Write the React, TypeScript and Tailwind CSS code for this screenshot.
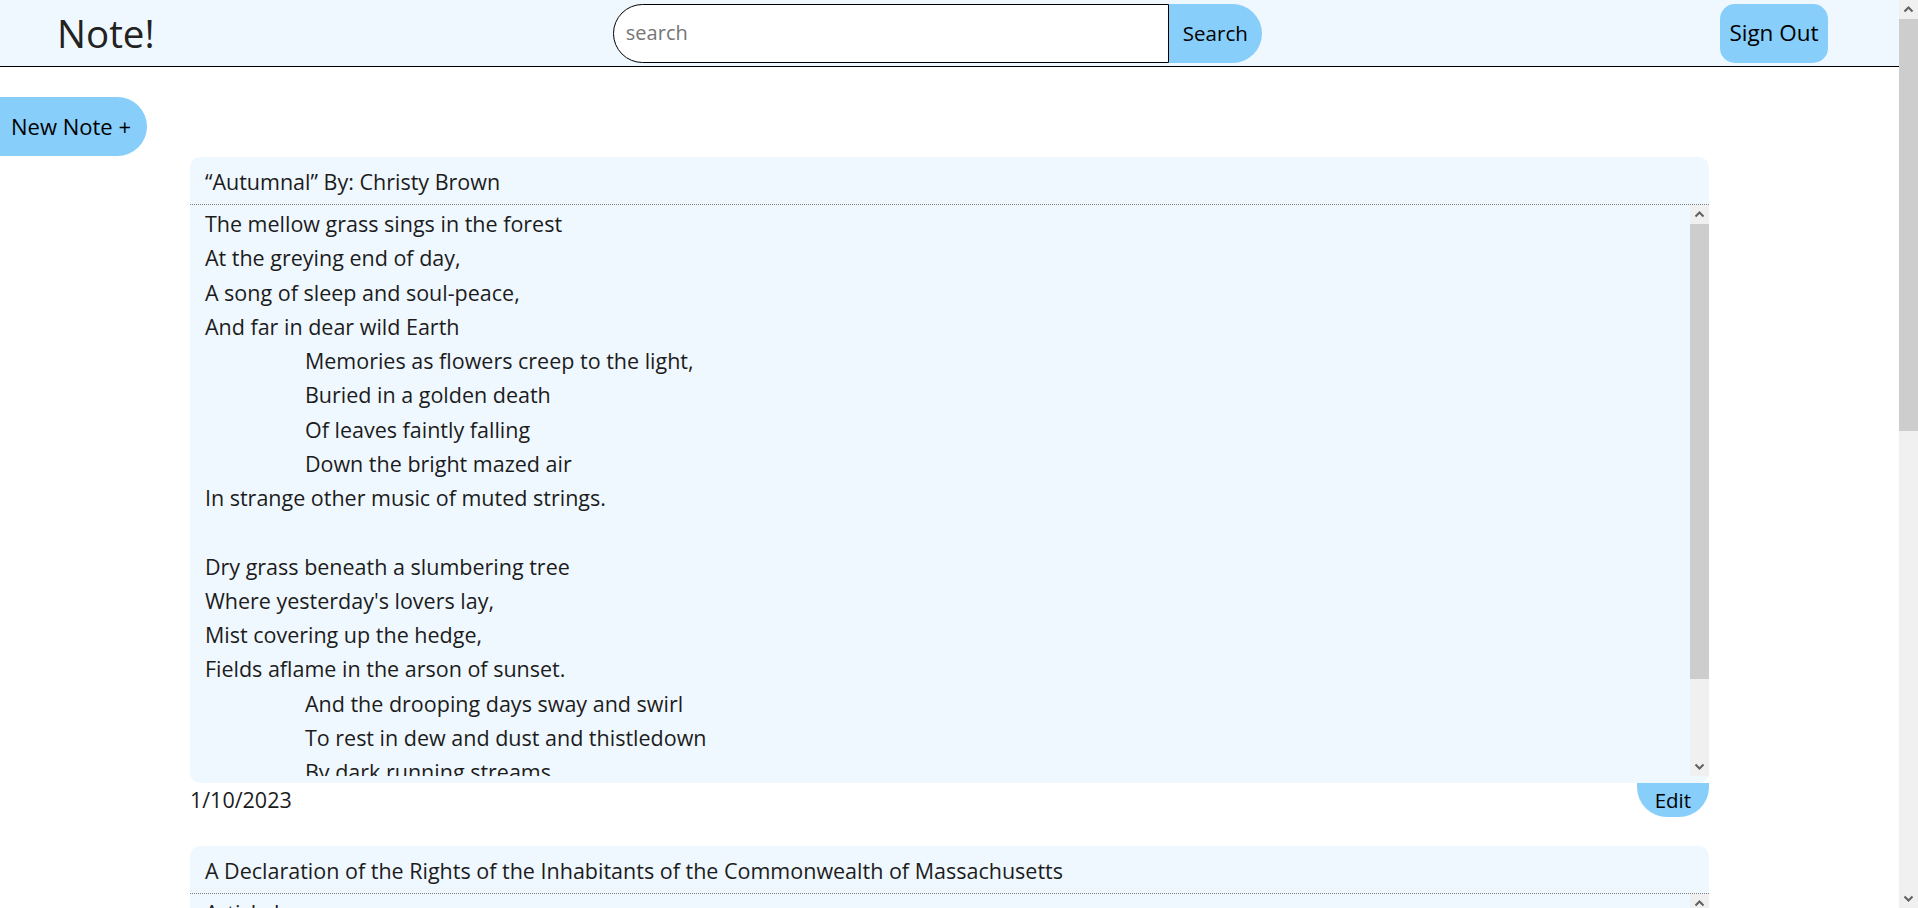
import React from "react";

type Line = { text: string; indent?: boolean };

const poem: Line[] = [
  { text: "The mellow grass sings in the forest" },
  { text: "At the greying end of day," },
  { text: "A song of sleep and soul-peace," },
  { text: "And far in dear wild Earth" },
  { text: "Memories as flowers creep to the light,", indent: true },
  { text: "Buried in a golden death", indent: true },
  { text: "Of leaves faintly falling", indent: true },
  { text: "Down the bright mazed air", indent: true },
  { text: "In strange other music of muted strings." },
  { text: "" },
  { text: "Dry grass beneath a slumbering tree" },
  { text: "Where yesterday's lovers lay," },
  { text: "Mist covering up the hedge," },
  { text: "Fields aflame in the arson of sunset." },
  { text: "And the drooping days sway and swirl", indent: true },
  { text: "To rest in dew and dust and thistledown", indent: true },
  { text: "By dark running streams", indent: true },
];

const declaration: Line[] = [
  { text: "Article I." },
  {
    text: "All men are born free and equal, and have certain natural, essential, and unalienable rights; among which may be reckoned the right of enjoying and defending their lives and liberties; that of acquiring, possessing, and protecting property; in fine, that of seeking and obtaining their safety and happiness.",
  },
  { text: "" },
  { text: "Article II." },
];

const notes = [
  { title: "“Autumnal” By: Christy Brown", lines: poem, date: "1/10/2023" },
  {
    title:
      "A Declaration of the Rights of the Inhabitants of the Commonwealth of Massachusetts",
    lines: declaration,
    date: "1/10/2023",
  },
];

function Chevron({ up }: { up: boolean }) {
  return (
    <svg width="19" height="19" viewBox="0 0 19 19" className="block">
      <path
        d={up ? "M5.5 11.5L9.5 7.5L13.5 11.5" : "M5.5 7.5L9.5 11.5L13.5 7.5"}
        fill="none"
        stroke="#606060"
        strokeWidth="2"
      />
    </svg>
  );
}

// windows-style scrollbar column (headless browser hides the real ones)
function Scrollbar({ thumbHeight }: { thumbHeight: number }) {
  return (
    <div className="flex w-[19px] shrink-0 flex-col bg-[#f0f0f0]">
      <div className="h-[19px] shrink-0">
        <Chevron up />
      </div>
      <div className="min-h-0 flex-1">
        <div className="bg-[#cdcdcd]" style={{ height: thumbHeight }} />
      </div>
      <div className="h-[19px] shrink-0">
        <Chevron up={false} />
      </div>
    </div>
  );
}

function NoteCard({ title, lines, date }: { title: string; lines: Line[]; date: string }) {
  return (
    <div className="mb-[29px]">
      <div className="rounded-[10px] bg-[#f0f8ff] pb-[7px]">
        <div className="border-b border-dotted border-[#808080] px-[15px] pt-[11px] pb-[9px] text-[21.5px] leading-[27px]">
          {title}
        </div>
        <div className="flex h-[571px]">
          <div className="min-w-0 flex-1 overflow-hidden pt-[2px] pl-[15px] pr-[10px] text-[21.5px] leading-[34.25px]">
            {lines.map((line, i) => (
              <div key={i} className={`min-h-[34.25px] ${line.indent ? "pl-[100px]" : ""}`}>
                {line.text}
              </div>
            ))}
          </div>
          <Scrollbar thumbHeight={455} />
        </div>
      </div>
      <div className="flex items-start justify-between">
        <span className="text-[21.5px] leading-[34px]">{date}</span>
        <button className="h-[34px] rounded-b-[30px] bg-[#87cefa] px-[18px] text-[20.5px] leading-none text-black">
          Edit
        </button>
      </div>
    </div>
  );
}

export default function App() {
  return (
    <div className="flex h-[908px] overflow-hidden bg-white font-['Open_Sans',sans-serif] text-[#1c1c1c]">
      <div className="min-w-0 flex-1 overflow-hidden">
        {/* top bar */}
        <header className="flex h-[67px] items-center justify-between border-b border-black bg-[#f0f8ff] pl-[57px] pr-[71px]">
          <h1 className="text-[38.5px] leading-none text-[#222]">Note!</h1>
          <form className="flex h-[59px]" onSubmit={(e) => e.preventDefault()}>
            <input
              placeholder="search"
              className="w-[556px] rounded-l-full border border-black bg-white pl-[12px] text-[20px] outline-none placeholder:text-[#757575]"
            />
            <button className="w-[93px] rounded-r-full bg-[#87cefa] text-[20.5px] text-black">
              Search
            </button>
          </form>
          <button className="h-[59px] w-[108px] rounded-[15px] bg-[#87cefa] text-[22.5px] text-black">
            Sign Out
          </button>
        </header>

        <main>
          <button className="mt-[30px] mb-[1px] block h-[59px] w-[147px] rounded-r-full bg-[#87cefa] pl-[11px] text-left text-[22px] text-black">
            New Note +
          </button>
          <div className="mx-auto w-4/5">
            {notes.map((n, i) => (
              <NoteCard key={i} title={n.title} lines={n.lines} date={n.date} />
            ))}
          </div>
        </main>
      </div>
      <Scrollbar thumbHeight={412} />
    </div>
  );
}
